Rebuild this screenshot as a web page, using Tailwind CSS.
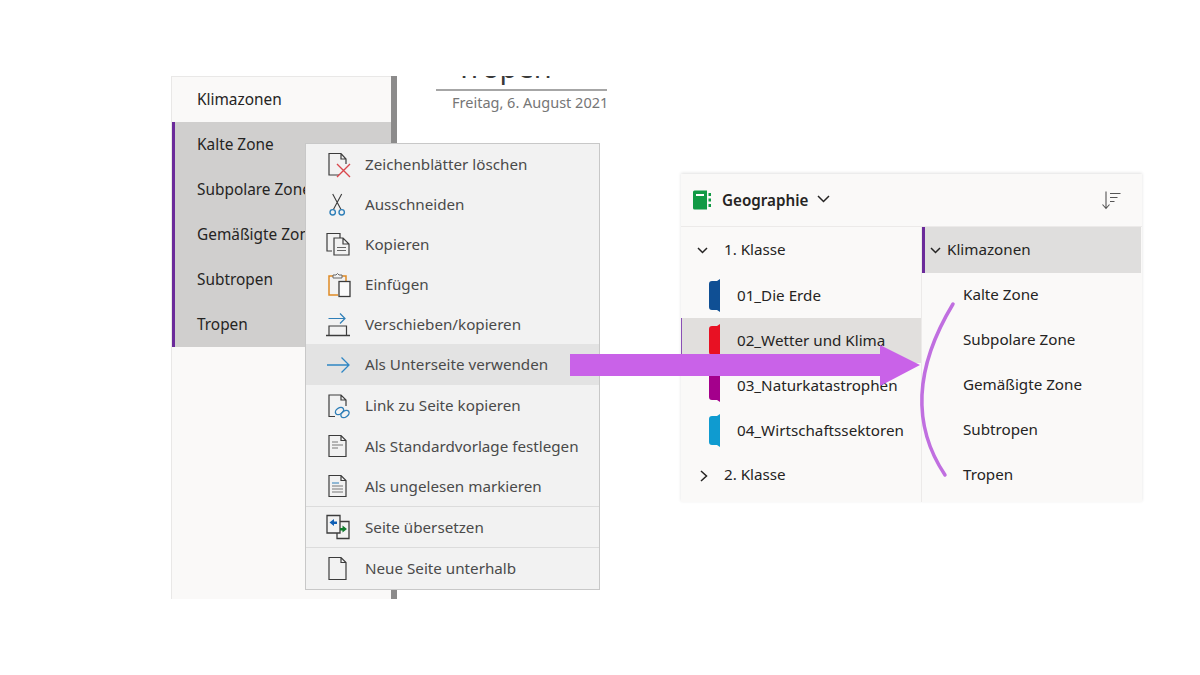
<!DOCTYPE html>
<html lang="de">
<head>
<meta charset="UTF-8">
<title>Unterseite</title>
<script src="https://cdn.jsdelivr.net/npm/@tailwindcss/browser@4"></script>
</head>
<body class="bg-white font-['Noto_Sans','Open_Sans',sans-serif]">
<div class="relative w-[1200px] h-[675px] overflow-hidden bg-white">

    <!-- Seitenliste links -->
    <div class="absolute left-[171px] top-[76px] w-[226px] h-[523px] flex">
        <div class="w-[220px] bg-[#faf9f8] border-l border-t border-[#e9e8e7] text-[15.4px] text-[#252423]">
            <div class="h-[45px] flex items-center pl-[25px]">Klimazonen</div>
            <div class="h-[225px] bg-[#d0cfce] border-l-[3px] border-[#6b2a9a] pl-[22px]">
                <div class="h-[45px] flex items-center whitespace-nowrap">Kalte Zone</div>
                <div class="h-[45px] flex items-center whitespace-nowrap">Subpolare Zone</div>
                <div class="h-[45px] flex items-center whitespace-nowrap">Gemäßigte Zone</div>
                <div class="h-[45px] flex items-center whitespace-nowrap">Subtropen</div>
                <div class="h-[45px] flex items-center whitespace-nowrap">Tropen</div>
            </div>
        </div>
        <div class="w-[6px] bg-[#8c8b8b]"></div>
    </div>

    <!-- Seitentitel -->
    <div class="absolute left-[436px] top-[76px] w-[171px]">
        <div class="h-[13px] overflow-hidden border-b-2 border-[#a6a6a6] box-content">
            <div class="pl-[20px] -mt-[31px] text-[29px] leading-[44px] text-[#3a3a3a]">Tropen</div>
        </div>
        <div class="pl-[16px] mt-[1px] text-[14.5px] leading-[20px] text-[#767676] whitespace-nowrap">Freitag, 6. August 2021</div>
    </div>

    <!-- Kontextmenü -->
    <div class="absolute left-[305px] top-[143px] w-[295px] h-[447px] bg-[#f2f2f2] border border-[#c8c8c8] text-[15.2px] text-[#4a4a4a]">
        <div class="h-[40px] flex items-center pl-[18px]">
            <svg class="w-[30px] h-[30px] mr-[11px] shrink-0" viewBox="0 0 30 30" fill="none" stroke="#3c3c3c" stroke-width="1.2"><path d="M15 26H5V4.5H17L22 10V15M17 4.5V10H22"/><path d="M13 15L26 28M26 15L13 28" stroke="#d9484d" stroke-width="1.4"/></svg>
            <span>Zeichenblätter löschen</span>
        </div>
        <div class="h-[40px] flex items-center pl-[18px]">
            <svg class="w-[30px] h-[30px] mr-[11px] shrink-0" viewBox="0 0 30 30" fill="none" stroke="#3c3c3c" stroke-width="1.1"><path d="M8.7 5L17 20.5M17.7 5L9.4 20.5"/><circle cx="8.7" cy="23.3" r="2.7" stroke="#2f7fb8" stroke-width="1.4"/><circle cx="17.7" cy="23.3" r="2.7" stroke="#2f7fb8" stroke-width="1.4"/></svg>
            <span>Ausschneiden</span>
        </div>
        <div class="h-[40px] flex items-center pl-[18px]">
            <svg class="w-[30px] h-[30px] mr-[11px] shrink-0" viewBox="0 0 30 30" fill="none" stroke="#3c3c3c" stroke-width="1.2"><path d="M8 22H3V4.5H16V9"/><path d="M10 9H19L25 15V26H10ZM19 9V15H25"/><path d="M13 18.5H22M13 21.5H22" stroke="#666" stroke-width="1"/></svg>
            <span>Kopieren</span>
        </div>
        <div class="h-[40px] flex items-center pl-[18px]">
            <svg class="w-[30px] h-[30px] mr-[11px] shrink-0" viewBox="0 0 30 30" fill="none" stroke-width="1.3"><path d="M14 26H5V7H22V12" stroke="#e08a24" stroke-width="1.5"/><path d="M9 9V6H12Q13.5 3 15 6H18V9Z" stroke="#666" fill="#f2f2f2" stroke-width="1"/><rect x="15" y="12.5" width="11" height="15" stroke="#3c3c3c" fill="#fbfbfb"/></svg>
            <span>Einfügen</span>
        </div>
        <div class="h-[40px] flex items-center pl-[18px]">
            <svg class="w-[30px] h-[30px] mr-[11px] shrink-0" viewBox="0 0 30 30" fill="none" stroke="#3c3c3c" stroke-width="1.2"><path d="M4.5 9.5H21M16 4.5L21 9.5L16 14.5" stroke="#2f7fb8"/><path d="M5 26V17H22.5V26"/><path d="M2 26.5H26" stroke-width="1.5"/></svg>
            <span>Verschieben/kopieren</span>
        </div>
        <div class="h-[41px] flex items-center pl-[18px] bg-[#e3e3e3]">
            <svg class="w-[30px] h-[30px] mr-[11px] shrink-0" viewBox="0 0 30 30" fill="none" stroke="#2f86c4" stroke-width="1.3"><path d="M3 15H25M17.5 7.5L25 15L17.5 22.5"/></svg>
            <span>Als Unterseite verwenden</span>
        </div>
        <div class="h-[41px] flex items-center pl-[18px]">
            <svg class="w-[30px] h-[30px] mr-[11px] shrink-0" viewBox="0 0 30 30" fill="none" stroke="#3c3c3c" stroke-width="1.2"><path d="M11 25.5H5V4H17L22 9V15M17 4V9H22"/><ellipse cx="15.5" cy="20" rx="4.5" ry="3" transform="rotate(-35 15.5 20)" stroke="#2f7fb8" stroke-width="1.4"/><ellipse cx="21" cy="23" rx="4.5" ry="3" transform="rotate(-35 21 23)" stroke="#2f7fb8" stroke-width="1.4"/></svg>
            <span>Link zu Seite kopieren</span>
        </div>
        <div class="h-[40px] flex items-center pl-[18px]">
            <svg class="w-[30px] h-[30px] mr-[11px] shrink-0" viewBox="0 0 30 30" fill="none" stroke="#3c3c3c" stroke-width="1.2"><path d="M5 4.5H17L22 9.5V25.5H5ZM17 4.5V9.5H22"/><path d="M8 11H14M8 14H19M8 17H14" stroke="#777" stroke-width="1"/></svg>
            <span>Als Standardvorlage festlegen</span>
        </div>
        <div class="h-[40px] flex items-center pl-[18px]">
            <svg class="w-[30px] h-[30px] mr-[11px] shrink-0" viewBox="0 0 30 30" fill="none" stroke="#3c3c3c" stroke-width="1.2"><path d="M5 4.5H17L22 9.5V25.5H5ZM17 4.5V9.5H22"/><path d="M8 12H15" stroke="#2f7fb8" stroke-width="1"/><path d="M8 15H19M8 18H19M8 21H19" stroke="#777" stroke-width="1"/></svg>
            <span>Als ungelesen markieren</span>
        </div>
        <div class="h-[41px] flex items-center pl-[18px] border-t border-[#dcdcdc]">
            <svg class="w-[30px] h-[30px] mr-[11px] shrink-0" viewBox="0 0 30 30" fill="none" stroke="#3c3c3c" stroke-width="1.3"><path d="M3 3.5H16V21H3Z" fill="#f2f2f2"/><path d="M16 9.5H25V26.5H13V21"/><path d="M5.5 10.5L10 7V9.5H13V12H10V14Z" fill="#0f5fb5" stroke="none"/><path d="M23 17L18.5 13.5V16H16V18.5H18.5V20.5Z" fill="#0f7b2c" stroke="none"/></svg>
            <span>Seite übersetzen</span>
        </div>
        <div class="h-[41px] flex items-center pl-[18px] border-t border-[#dcdcdc]">
            <svg class="w-[30px] h-[30px] mr-[11px] shrink-0" viewBox="0 0 30 30" fill="none" stroke="#3c3c3c" stroke-width="1.2"><path d="M5 4.5H17L22 9.5V26.5H5ZM17 4.5V9.5H22"/></svg>
            <span>Neue Seite unterhalb</span>
        </div>
    </div>

    <!-- OneNote Navigation -->
    <div class="absolute left-[681px] top-[174px] w-[461px] h-[328px] bg-[#faf9f8] text-[15.2px] text-[#252423] flex flex-col shadow-[0_-1px_3px_rgba(0,0,0,0.12)]">
        <div class="h-[53px] shrink-0 flex items-center border-b border-[#eceae9] pl-[11px] pr-[21px]">
            <svg class="w-[20px] h-[20px] mr-[10px] mb-[1px]" viewBox="0 0 20 20"><path d="M1 2Q1 0.5 2.5 0.5H15V19.5H2.5Q1 19.5 1 18Z" fill="#119a45"/><path d="M4 4H12V6H4Z" fill="#fff"/><path d="M16.5 3H19V6H16.5ZM16.5 8.5H19V11.5H16.5ZM16.5 14H19V17H16.5Z" fill="#119a45"/></svg>
            <span class="font-semibold">Geographie</span>
            <svg class="w-[13px] h-[8px] ml-[9px] mb-[2px]" viewBox="0 0 13 8" fill="none" stroke="#252423" stroke-width="1.5"><path d="M1 1L6.5 6.5L12 1"/></svg>
            <svg class="w-[20px] h-[19px] ml-auto" viewBox="0 0 20 19" fill="none" stroke="#555" stroke-width="1.1"><path d="M5 0.5V17M1.5 13.5L5 17.5L8.5 13.5"/><path d="M9 2.5H19.5M9 6.5H16.5M9 10.5H13.5"/></svg>
        </div>
        <div class="flex flex-1">
            <div class="w-[241px] border-r border-[#eceae9]">
                <div class="h-[46px] flex items-center pl-[16px]">
                    <svg class="w-[11px] h-[7px] mr-[17px]" viewBox="0 0 11 7" fill="none" stroke="#252423" stroke-width="1.5"><path d="M1 1L5.5 5.5L10 1"/></svg>
                    <span class="-ml-[1px] pb-[2px]">1. Klasse</span>
                </div>
                <div class="h-[45px] flex items-center pl-[28px]">
                    <svg class="w-[11px] h-[33px] mr-[17px]" viewBox="0 0 11 33"><path d="M11 0V33L8 31H3Q0 31 0 28V5Q0 2 3 2H8Z" fill="#0f4f94"/></svg>
                    <span>01_Die Erde</span>
                </div>
                <div class="h-[45px] flex items-center pl-[27px] bg-[#e1dfdd] border-l border-[#8a4fb5]">
                    <svg class="w-[11px] h-[33px] mr-[17px]" viewBox="0 0 11 33"><path d="M11 0V33L8 31H3Q0 31 0 28V5Q0 2 3 2H8Z" fill="#e81123"/></svg>
                    <span>02_Wetter und Klima</span>
                </div>
                <div class="h-[45px] flex items-center pl-[28px]">
                    <svg class="w-[11px] h-[33px] mr-[17px]" viewBox="0 0 11 33"><path d="M11 0V33L8 31H3Q0 31 0 28V5Q0 2 3 2H8Z" fill="#a4008c"/></svg>
                    <span>03_Naturkatastrophen</span>
                </div>
                <div class="h-[45px] flex items-center pl-[28px]">
                    <svg class="w-[11px] h-[33px] mr-[17px]" viewBox="0 0 11 33"><path d="M11 0V33L8 31H3Q0 31 0 28V5Q0 2 3 2H8Z" fill="#0f9bd0"/></svg>
                    <span>04_Wirtschaftssektoren</span>
                </div>
                <div class="h-[45px] flex items-center pl-[19px]">
                    <svg class="w-[8px] h-[12px] mr-[16px]" viewBox="0 0 8 12" fill="none" stroke="#252423" stroke-width="1.5"><path d="M1 1L6.5 6L1 11"/></svg>
                    <span class="pb-[2px]">2. Klasse</span>
                </div>
            </div>
            <div class="flex-1">
                <div class="h-[46px] flex items-center bg-[#dfdedd] border-l-[3px] border-[#6b2a9a] pl-[5px] mr-px">
                    <svg class="w-[11px] h-[7px] mr-[6px]" viewBox="0 0 11 7" fill="none" stroke="#252423" stroke-width="1.5"><path d="M1 1L5.5 5.5L10 1"/></svg>
                    <span class="pb-[2px]">Klimazonen</span>
                </div>
                <div class="pl-[41px]">
                    <div class="h-[45px] flex items-center pb-[2px]">Kalte Zone</div>
                    <div class="h-[45px] flex items-center pb-[2px]">Subpolare Zone</div>
                    <div class="h-[45px] flex items-center pb-[2px]">Gemäßigte Zone</div>
                    <div class="h-[45px] flex items-center pb-[2px]">Subtropen</div>
                    <div class="h-[45px] flex items-center pb-[2px]">Tropen</div>
                </div>
            </div>
        </div>
    </div>

    <!-- Pfeil und Bogen -->
    <svg class="absolute left-0 top-0 w-[1200px] h-[675px] pointer-events-none" viewBox="0 0 1200 675" fill="none">
        <path d="M570 354H880V345L920 365L880 386V376H570Z" fill="#c962e8"/>
        <path d="M953 304Q895 400 945 475" stroke="#c06fe0" stroke-width="3.5" stroke-linecap="round"/>
    </svg>
</div>
</body>
</html>
